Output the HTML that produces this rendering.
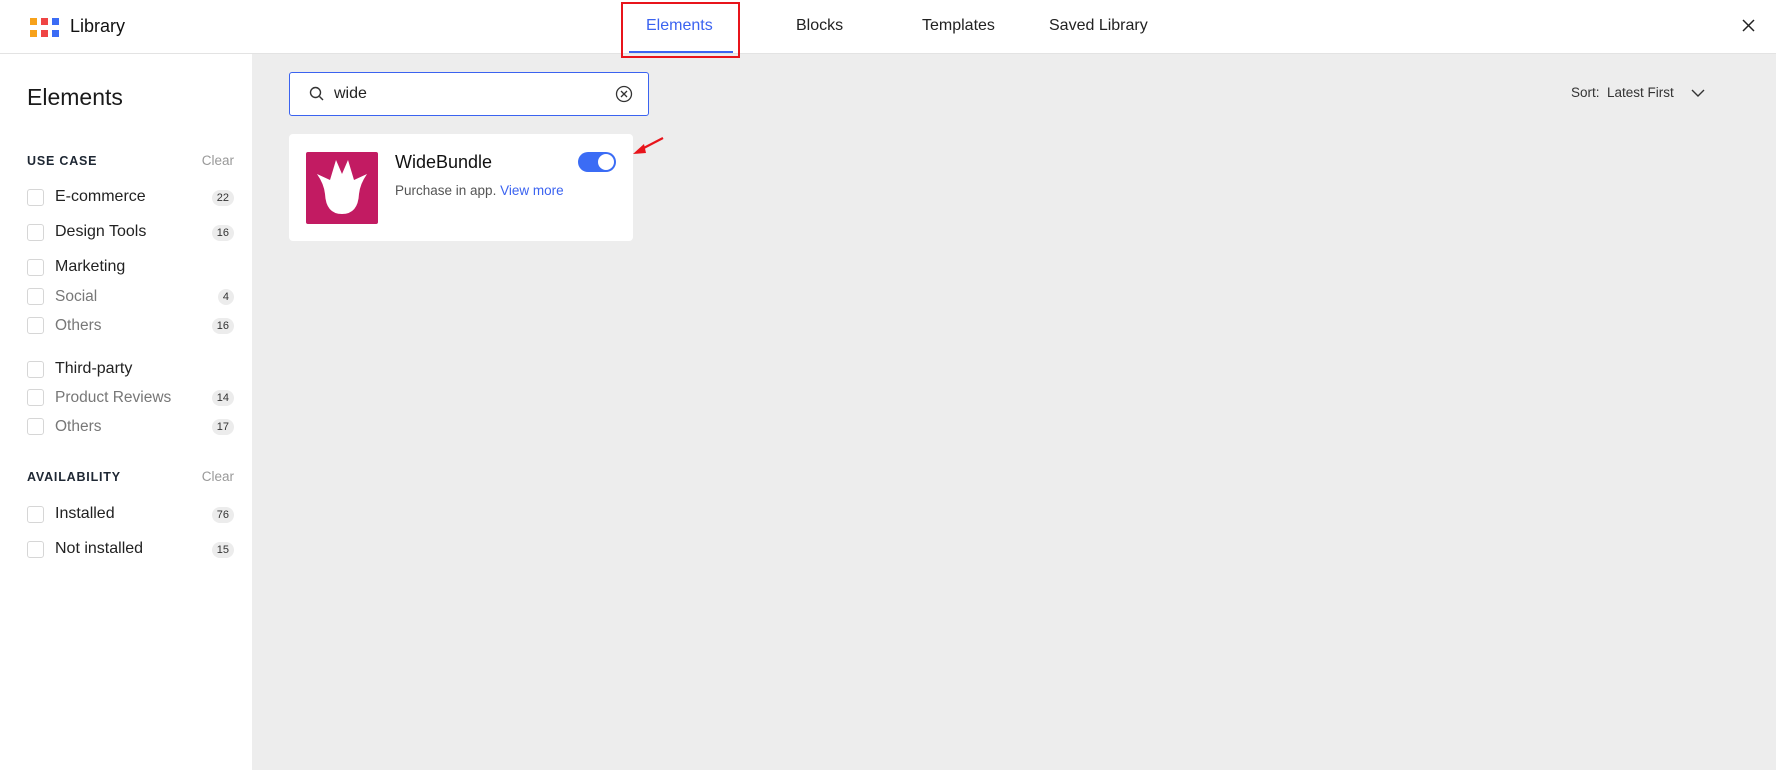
<!DOCTYPE html>
<html><head><meta charset="utf-8"><style>
*{box-sizing:border-box;margin:0;padding:0}
body{width:1776px;height:770px;overflow:hidden;font-family:"Liberation Sans",sans-serif;background:#ededed;position:relative;color:#1f1f1f}
.hdr{position:absolute;left:0;top:0;width:1776px;height:54px;background:#fff;border-bottom:1px solid #e3e3e3}
.abs{position:absolute}
.tab{position:absolute;top:17px;font-size:16px;color:#222}
.side{position:absolute;left:0;top:54px;width:252px;height:716px;background:#fff}
.cb{position:absolute;left:27px;width:17px;height:17px;border:1px solid #d6d6d6;border-radius:3px;background:#fff}
.lbl{position:absolute;left:55px;font-size:16px;color:#222}
.lbl.g{color:#777;font-size:15.5px}
.bd{position:absolute;right:18px;font-size:11px;color:#333;background:#ececec;border-radius:8px;padding:1px 5px;line-height:14px}
.sec{position:absolute;left:27px;font-size:12.5px;font-weight:bold;letter-spacing:.8px;color:#1e2733}
.clr{position:absolute;right:18px;font-size:13.5px;color:#999}
</style></head><body>
<div class="hdr"></div>
<svg class="abs" style="left:30px;top:18px" width="29" height="19">
<rect x="0" y="0" width="7" height="7" fill="#f7a21b"/><rect x="11" y="0" width="7" height="7" fill="#ef4444"/><rect x="22" y="0" width="7" height="7" fill="#3b6cf5"/>
<rect x="0" y="12" width="7" height="7" fill="#f7a21b"/><rect x="11" y="12" width="7" height="7" fill="#ef4444"/><rect x="22" y="12" width="7" height="7" fill="#3b6cf5"/></svg>
<div class="abs" style="left:70px;top:16px;font-size:18px;color:#111">Library</div>
<div class="tab" style="left:646px;color:#3b63f0">Elements</div>
<div class="abs" style="left:629px;top:51px;width:104px;height:2px;background:#3b63f0"></div>
<div class="abs" style="left:621px;top:2px;width:119px;height:56px;border:2px solid #e8141b"></div>
<div class="tab" style="left:796px">Blocks</div>
<div class="tab" style="left:922px">Templates</div>
<div class="tab" style="left:1049px">Saved Library</div>
<svg class="abs" style="left:1742px;top:19px" width="13" height="13"><path d="M1 1L12 12M12 1L1 12" stroke="#222" stroke-width="1.5"/></svg>

<div class="side">
<div class="abs" style="left:27px;top:30px;font-size:23px;color:#1a1a1a">Elements</div>
<div class="sec" style="top:100px">USE CASE</div><div class="clr" style="top:99px">Clear</div>
<div class="cb" style="top:135px"></div><div class="lbl" style="top:134px">E-commerce</div><div class="bd" style="top:136px">22</div>
<div class="cb" style="top:170px"></div><div class="lbl" style="top:169px">Design Tools</div><div class="bd" style="top:171px">16</div>
<div class="cb" style="top:205px"></div><div class="lbl" style="top:204px">Marketing</div>
<div class="cb" style="top:234px"></div><div class="lbl g" style="top:234px">Social</div><div class="bd" style="top:235px">4</div>
<div class="cb" style="top:263px"></div><div class="lbl g" style="top:263px">Others</div><div class="bd" style="top:264px">16</div>
<div class="cb" style="top:307px"></div><div class="lbl" style="top:306px">Third-party</div>
<div class="cb" style="top:335px"></div><div class="lbl g" style="top:335px">Product Reviews</div><div class="bd" style="top:336px">14</div>
<div class="cb" style="top:364px"></div><div class="lbl g" style="top:364px">Others</div><div class="bd" style="top:365px">17</div>
<div class="sec" style="top:416px">AVAILABILITY</div><div class="clr" style="top:415px">Clear</div>
<div class="cb" style="top:452px"></div><div class="lbl" style="top:451px">Installed</div><div class="bd" style="top:453px">76</div>
<div class="cb" style="top:487px"></div><div class="lbl" style="top:486px">Not installed</div><div class="bd" style="top:488px">15</div>
</div>

<div class="abs" style="left:289px;top:72px;width:360px;height:44px;background:#fff;border:1px solid #3b63f0;border-radius:3px"></div>
<svg class="abs" style="left:309px;top:86px" width="16" height="16"><circle cx="6.5" cy="6.5" r="5" stroke="#333" stroke-width="1.4" fill="none"/><path d="M10.5 10.5L14 14" stroke="#333" stroke-width="1.4"/></svg>
<div class="abs" style="left:334px;top:85px;font-size:16px;color:#222">wide</div>
<svg class="abs" style="left:615px;top:85px" width="18" height="18"><circle cx="9" cy="9" r="7.5" stroke="#333" stroke-width="1.3" fill="none"/><path d="M6 6L12 12M12 6L6 12" stroke="#333" stroke-width="1.3"/></svg>

<div class="abs" style="left:289px;top:134px;width:344px;height:107px;background:#fff;border-radius:4px"></div>
<div class="abs" style="left:306px;top:152px;width:72px;height:72px;background:#c21b62;border-radius:2px"></div>
<svg class="abs" style="left:306px;top:152px" width="72" height="72"><path d="M11 22 L24 28 L30 8 L36 22 L42 8 L48 28 L61 22 Q54 32 53 42 Q52 62 36 62 Q20 62 19 42 Q18 32 11 22Z" fill="#fff"/></svg>
<div class="abs" style="left:395px;top:152px;font-size:18px;color:#111">WideBundle</div>
<div class="abs" style="left:395px;top:183px;font-size:13.5px;color:#555">Purchase in app. <span style="color:#3b63f0">View more</span></div>
<div class="abs" style="left:578px;top:152px;width:38px;height:20px;background:#3b6cf5;border-radius:10px"></div>
<div class="abs" style="left:597px;top:153px;width:18px;height:18px;background:#fff;border:1.5px solid #3b6cf5;border-radius:50%"></div>
<svg class="abs" style="left:630px;top:136px" width="36" height="22"><path d="M33 2L8 15" stroke="#e8141b" stroke-width="2.2"/><path d="M3 18L14 8L16 17Z" fill="#e8141b"/></svg>

<div class="abs" style="left:1571px;top:85px;font-size:13.5px;color:#333">Sort:&nbsp; Latest First</div>
<svg class="abs" style="left:1691px;top:89px" width="14" height="9"><path d="M1 1L7 7L13 1" stroke="#333" stroke-width="1.4" fill="none"/></svg>
</body></html>
